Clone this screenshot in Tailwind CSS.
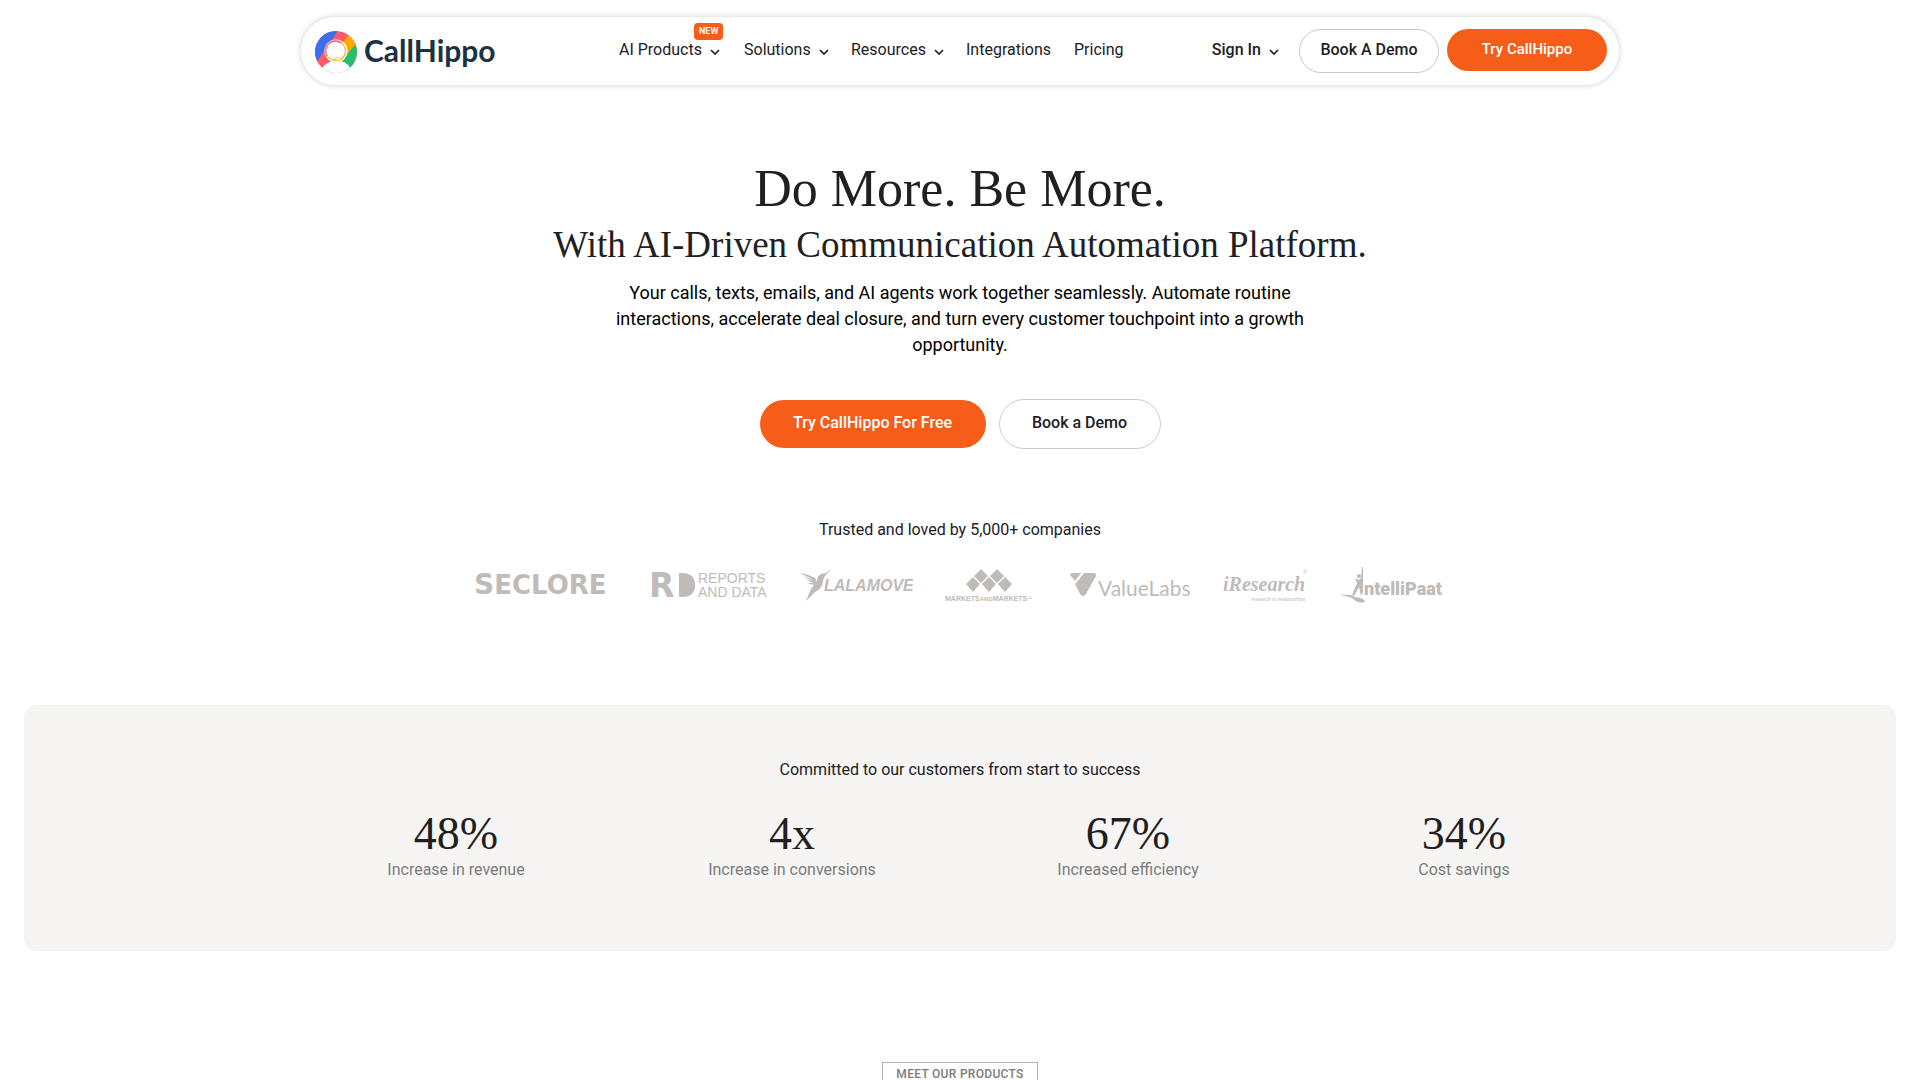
<!DOCTYPE html>
<html lang="en">
<head>
<meta charset="utf-8">
<meta name="viewport" content="width=device-width, initial-scale=1">
<title>CallHippo</title>
<script src="https://cdn.jsdelivr.net/npm/@tailwindcss/browser@4"></script>
</head>
<body class="bg-white font-[Roboto,sans-serif] text-base text-[#21201f]">
<svg class="hidden">
  <symbol id="chevron" viewBox="0 0 10 6"><path d="M1 1l4 4 4-4" fill="none" stroke="#21201f" stroke-width="1.7"/></symbol>
</svg>

<header class="px-4 pt-[17px]">
  <nav class="mx-auto flex h-[68px] max-w-[1318px] items-start rounded-full bg-white pr-3 pl-3.5 shadow-[0_0_6px_rgba(0,0,0,0.2)]">
    <a href="#" class="mt-3.5 flex h-[42px] w-[304px] items-start gap-[7px]">
      <svg class="size-[42px] shrink-0" viewBox="0 0 124 124" aria-hidden="true">
        <clipPath id="disc"><circle cx="62" cy="62" r="62"/></clipPath>
        <g clip-path="url(#disc)">
          <path d="M0 0h124v124H0z" fill="#ff5a6a"/>
          <path d="M0 0h67L8 88H0z" fill="#3b70ea"/>
          <path d="M104 6l24 28-44 56H60V60z" fill="#ffa800"/>
          <path d="M124 34v90H96L76 90z" fill="#26c06b"/>
          <path d="M18 112c14-16 24-24 46-24s32 8 42 24l-10 14H24z" fill="#fff"/>
          <circle cx="62" cy="59" r="34" fill="#fff"/>
          <path d="M36 74A29 29 0 0 1 80 37" fill="none" stroke="#ff5a6a" stroke-width="4"/>
          <path d="M80 37A29 29 0 0 1 70 86H54A29 29 0 0 1 36 74" fill="none" stroke="#ffa800" stroke-width="3"/>
          <rect x="58" y="80" width="18" height="8" rx="4" fill="#fff" stroke="#ffa800" stroke-width="2"/>
        </g>
      </svg>
      <span class="font-[Lato,sans-serif] text-[30px] leading-[38px] font-bold text-[#1b3340]">CallHippo</span>
    </a>
    <div class="mt-[21px] grid grid-cols-[125px_107px_115px_108px_auto] leading-6">
      <button class="relative flex items-center gap-2 whitespace-nowrap">AI Products
        <svg class="mt-1 h-1.5 w-2.5"><use href="#chevron"/></svg>
        <span class="absolute -top-[15px] left-[75px] rounded-sm bg-[#f55d18] px-[5px] text-[9px] leading-[17px] font-semibold text-white">NEW</span>
      </button>
      <button class="flex items-center gap-2">Solutions <svg class="mt-1 h-1.5 w-2.5"><use href="#chevron"/></svg></button>
      <button class="flex items-center gap-2">Resources <svg class="mt-1 h-1.5 w-2.5"><use href="#chevron"/></svg></button>
      <a href="#" class="justify-self-start">Integrations</a>
      <a href="#">Pricing</a>
    </div>
    <div class="ml-auto flex items-start font-medium">
      <button class="mt-[21px] mr-5 flex items-center gap-2 leading-6">Sign In <svg class="mt-1 h-1.5 w-2.5"><use href="#chevron"/></svg></button>
      <a href="#" class="mt-3 mr-2 h-11 w-[140px] rounded-full border border-[#cbcac8] text-center leading-10">Book A Demo</a>
      <a href="#" class="mt-3 h-[42px] w-40 rounded-full bg-[#f55d18] text-center text-[15px] leading-10 text-white">Try CallHippo</a>
    </div>
  </nav>
</header>

<main>
  <section class="flex flex-col items-center px-4 pt-[72px] text-center">
    <h1 class="font-['Liberation_Serif',serif] text-[52px] leading-16">Do More. Be More.</h1>
    <h2 class="font-['Liberation_Serif',serif] text-[37px] leading-12">With AI-Driven Communication Automation Platform.</h2>
    <p class="mt-[11px] max-w-[720px] text-[18px] leading-[26px] text-black">Your calls, texts, emails, and AI agents work together seamlessly. Automate routine interactions, accelerate deal closure, and turn every customer touchpoint into a growth opportunity.</p>
    <div class="mt-[41px] flex items-center gap-[13px] font-medium">
      <a href="#" class="h-12 w-[226px] rounded-full bg-[#f55d18] leading-[45px] text-white">Try CallHippo For Free</a>
      <a href="#" class="h-[50px] w-[162px] rounded-full border border-[#cbcac8] leading-[45px]">Book a Demo</a>
    </div>
    <p class="mt-[69px] leading-6">Trusted and loved by 5,000+ companies</p>

    <div class="mt-[23px] flex items-center gap-8 fill-[#bfbbb8]">
      <svg class="h-10 w-[143px]" viewBox="0 0 143 40"><text x="0" y="29" class="font-['DejaVu_Sans',sans-serif] text-[28px] font-bold">S<tspan class="text-[26px]">ECLORE</tspan></text></svg>
      <svg class="h-10 w-[118px]" viewBox="0 0 118 40">
        <text x="0" y="32" class="font-['DejaVu_Sans',sans-serif] text-[33px] font-bold">R</text>
        <path d="M30 8h5q11 1 11 12t-11 12h-5z"/>
        <text x="49" y="18" class="font-['Liberation_Sans',sans-serif] text-[14px]">REPORTS</text>
        <text x="49" y="32" class="font-['Liberation_Sans',sans-serif] text-[14px]">AND DATA</text>
      </svg>
      <svg class="h-10 w-[114px]" viewBox="0 0 114 40">
        <path d="M0 8q9 1 16 5l2 4q0-6 4-8l5-1 5-4-4 5q-3 2-4 7 0 7-8 11L7 36l5-12 3-4-7-2 6 0-8-4 8 2-10-5 10 3z"/>
        <text x="25" y="26" class="font-['Liberation_Sans',sans-serif] text-[16px] font-bold italic">LALAMOVE</text>
      </svg>
      <svg class="h-10 w-[93px]" viewBox="0 0 93 40">
        <path d="M36 4l7 7-7 7-7-7zM52 4l7 7-7 7-7-7zM28 12l7 7-7 8-7-8zM44 12l7 7-7 8-7-8zM60 12l7 7-7 8-7-8z"/>
        <text x="0" y="36" class="font-['Liberation_Sans',sans-serif] text-[7px] font-bold">MARKETS<tspan class="text-[6px]">AND</tspan>MARKETS<tspan class="text-[5px]">™</tspan></text>
      </svg>
      <svg class="h-10 w-[121px]" viewBox="0 0 121 40">
        <path d="M2 8h9l-6 8-5-6q0-2 2-2zM14 8h10q3 1 2 3l-10 18q-3 4-6 0l-5-10 2-2z"/>
        <text x="28" y="31" class="font-[Lato,sans-serif] text-[21px]">ValueLabs</text>
      </svg>
      <svg class="h-10 w-[85px]" viewBox="0 0 85 40">
        <text x="0" y="26" class="font-['Liberation_Serif',serif] text-[20px] font-bold italic">iResearch</text>
        <text x="80" y="9" class="font-['Liberation_Sans',sans-serif] text-[5px]">®</text>
        <text x="28" y="36" class="font-['Liberation_Sans',sans-serif] text-[5px]">research to relationships</text>
      </svg>
      <svg class="h-10 w-[106px]" viewBox="0 0 106 40">
        <circle cx="19" cy="11" r="2"/>
        <path d="M22 2h1v25l-2 4-2-9-5 9-2-1 5-12-2-5 4 2 2-2z"/>
        <path d="M0 30q11-1 15 2 10 1 10 5-7 2-13-4-6-2-12-3z"/>
        <text x="24" y="30" class="font-[Roboto,sans-serif] text-[18px] font-black">ntelliPaat</text>
      </svg>
    </div>
  </section>

  <section class="mx-6 mt-25 rounded-xl bg-[#f6f5f3] px-4 pt-[53px] pb-[69px] text-center">
    <h3 class="leading-6">Committed to our customers from start to success</h3>
    <dl class="mx-auto mt-7 grid max-w-[1344px] grid-cols-4">
      <div class="flex flex-col-reverse"><dt class="leading-6 text-[#7c7b7a]">Increase in revenue</dt><dd class="font-['Liberation_Serif',serif] text-[46px] leading-12">48%</dd></div>
      <div class="flex flex-col-reverse"><dt class="leading-6 text-[#7c7b7a]">Increase in conversions</dt><dd class="font-['Liberation_Serif',serif] text-[46px] leading-12">4x</dd></div>
      <div class="flex flex-col-reverse"><dt class="leading-6 text-[#7c7b7a]">Increased efficiency</dt><dd class="font-['Liberation_Serif',serif] text-[46px] leading-12">67%</dd></div>
      <div class="flex flex-col-reverse"><dt class="leading-6 text-[#7c7b7a]">Cost savings</dt><dd class="font-['Liberation_Serif',serif] text-[46px] leading-12">34%</dd></div>
    </dl>
  </section>

  <section class="mt-[111px] flex justify-center">
    <h4 class="border border-[#b5b4b3] px-[13px] text-[12px] leading-[23px] font-medium tracking-wide text-[#7c7b7a]">MEET OUR PRODUCTS</h4>
  </section>
</main>
</body>
</html>
